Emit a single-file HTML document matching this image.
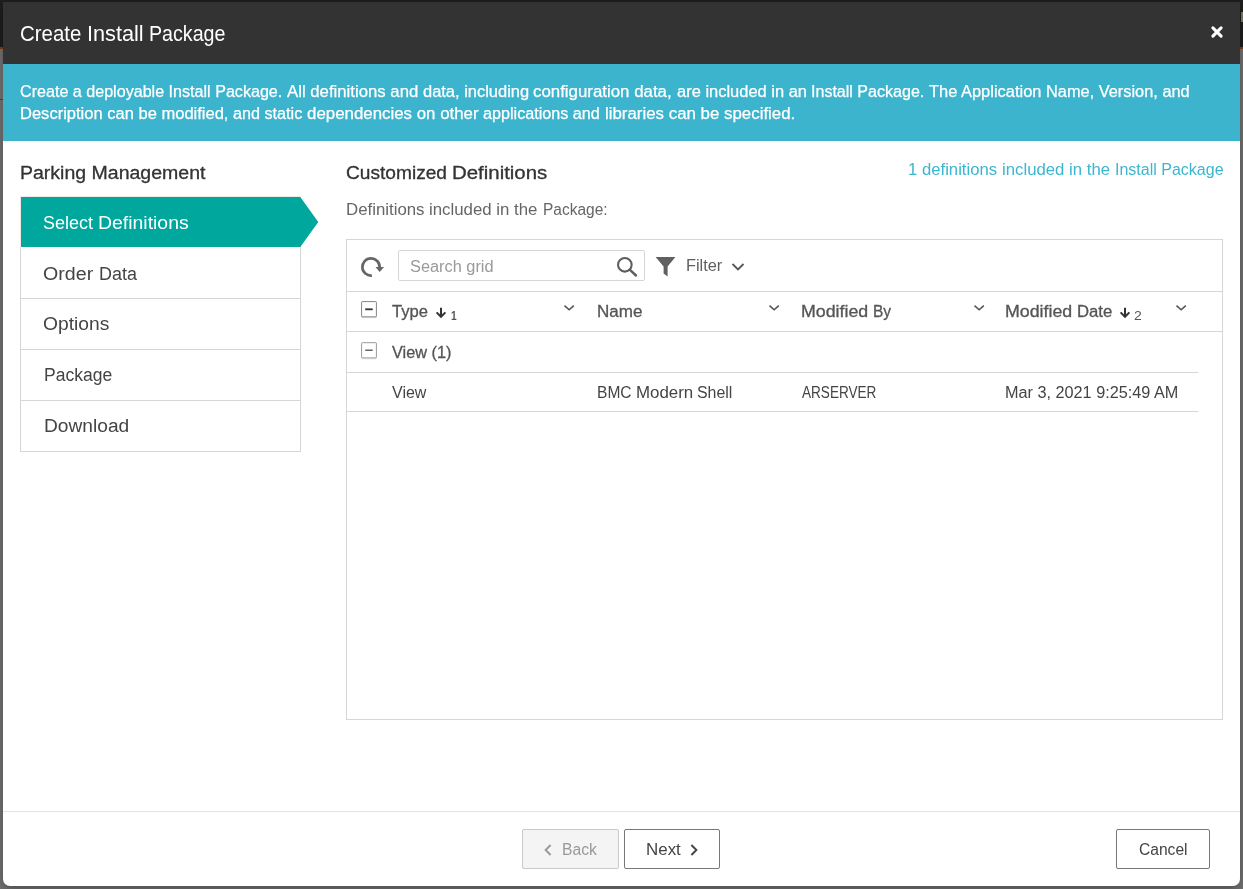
<!DOCTYPE html>
<html lang="en">
<head>
<meta charset="utf-8">
<title>Create Install Package</title>
<style>
html,body{margin:0;padding:0;}
body{width:1243px;height:889px;position:relative;overflow:hidden;background:#737373;font-family:"Liberation Sans",sans-serif;}
.abs{position:absolute;}
.t{position:absolute;transform-origin:0 0;white-space:pre;line-height:normal;font-family:"Liberation Sans",sans-serif;}
#bg-top{left:0;top:0;width:1243px;height:47px;background:#1e1e1e;}
#bg-orange{left:0;top:47px;width:1243px;height:2px;background:#8a3c08;}
#modal{left:3px;top:2px;width:1237px;height:884px;background:#ffffff;border-radius:0 0 7px 7px;box-shadow:0 4px 12px rgba(0,0,0,.32);overflow:hidden;}
#hdr{left:0;top:0;width:1237px;height:62px;background:#333333;}
#banner{left:0;top:62px;width:1237px;height:77px;background:#3cb4ce;}
#footline{left:0;top:809px;width:1237px;height:1px;background:#e3e3e3;}
#nav{left:20px;top:197px;width:279px;height:254px;border:1px solid #d6d6d6;border-top:none;}
.navline{left:20px;width:281px;height:1px;background:#d6d6d6;}
#navsel{left:20px;top:196px;width:279px;height:50px;background:#00a79d;border-left:1px solid #f3e6e6;border-top:1px solid #f3e6e6;}
#grid{left:346px;top:239px;width:875px;height:479px;border:1px solid #d6d6d6;}
.hline{height:1px;background:#d6d6d6;}
#search{left:398px;top:250px;width:245px;height:29px;border:1px solid #d6d6d6;border-radius:2px;background:#fff;}
.btn{top:829px;height:38px;border:1px solid #777;border-radius:2px;background:#fff;}

#texts{position:absolute;left:0;top:0;width:1243px;height:889px;will-change:transform;}

</style>
</head>
<body>
<div id="bg-top" class="abs"></div>
<div id="bg-orange" class="abs"></div>
<div class="abs" style="left:1241px;top:12px;width:2px;height:10px;background:#817b70"></div>
<div class="abs" style="left:0;top:99px;width:3px;height:1px;background:#4a4a4a"></div>
<div id="modal" class="abs">
  <div id="hdr" class="abs"></div>
  <div id="banner" class="abs"></div>
  <div id="footline" class="abs"></div>
</div>
<!-- close X -->
<svg class="abs" style="left:1208.8px;top:24px" width="16" height="16" viewBox="0 0 16 16"><path d="M3.9 3.9 L12.1 12.1 M12.1 3.9 L3.9 12.1" stroke="#fff" stroke-width="3.1" stroke-linecap="round"/></svg>
<!-- nav -->
<div id="nav" class="abs"></div>
<div class="abs navline" style="top:298px"></div>
<div class="abs navline" style="top:349px"></div>
<div class="abs navline" style="top:400px"></div>
<div id="navsel" class="abs"></div>
<svg class="abs" style="left:300px;top:197px" width="20" height="50" viewBox="0 0 20 50"><path d="M0 0 L0.3 0 L17.9 24.4 Q18.3 25 17.9 25.6 L0.3 50 L0 50 Z" fill="#00a79d"/></svg>
<!-- grid -->
<div id="grid" class="abs"></div>
<div class="abs hline" style="left:347px;top:291px;width:875px"></div>
<div class="abs hline" style="left:347px;top:331px;width:875px"></div>
<div class="abs hline" style="left:347px;top:372px;width:851px"></div>
<div class="abs hline" style="left:347px;top:411px;width:851px"></div>
<div id="search" class="abs"></div>
<!-- refresh icon -->
<svg class="abs" style="left:357px;top:253px" width="30" height="28" viewBox="0 0 30 28"><path d="M14.9 22.6 A8.65 8.65 0 1 1 22.65 14.3" fill="none" stroke="#666" stroke-width="2.7"/><path d="M18.5 14.1 L27.1 14.1 L22.7 19.1 Z" fill="#666"/></svg>
<!-- search icon -->
<svg class="abs" style="left:612px;top:253px" width="28" height="28" viewBox="0 0 28 28"><circle cx="12.85" cy="11.8" r="6.8" fill="none" stroke="#5e5e5e" stroke-width="2.1"/><path d="M17.7 16.7 L24 22.5" stroke="#5e5e5e" stroke-width="2.4" stroke-linecap="round"/></svg>
<!-- filter icon -->
<svg class="abs" style="left:654px;top:255px" width="24" height="24" viewBox="0 0 24 24"><path d="M1.6 2 L21.4 2 L13.6 11.6 L13.6 21.6 L9.6 18.6 L9.6 11.6 Z" fill="#606060"/></svg>
<!-- filter chevron -->
<svg class="abs" style="left:731px;top:262px" width="14" height="10" viewBox="0 0 14 10"><path d="M1.5 2 L7 7.5 L12.5 2" fill="none" stroke="#555" stroke-width="1.8"/></svg>
<!-- checkboxes -->
<svg class="abs" style="left:360px;top:300px" width="19" height="20" viewBox="0 0 19 20"><path d="M1.4 17.7 H16.6" stroke="#d2d2d2" stroke-width="0.9"/><rect x="1.6" y="1.6" width="14.8" height="15.2" rx="0.6" fill="#fff" stroke="#858585" stroke-width="1"/><rect x="5.2" y="8.4" width="7.5" height="1.8" fill="#333"/></svg>
<svg class="abs" style="left:360px;top:341px" width="19" height="20" viewBox="0 0 19 20"><path d="M1.4 17.8 H16.6" stroke="#dcdcdc" stroke-width="0.9"/><rect x="1.6" y="1.7" width="14.8" height="15.2" rx="0.6" fill="#fff" stroke="#9a9a9a" stroke-width="1"/><rect x="5.2" y="8.5" width="7.5" height="1.5" fill="#666"/></svg>
<!-- header chevrons -->
<svg class="abs hc" style="left:563px;top:303.6px" width="12" height="8" viewBox="0 0 12 8"><path d="M1.5 1.7 L6.15 5.8 L10.8 1.7" fill="none" stroke="#555" stroke-width="1.6"/></svg>
<svg class="abs hc" style="left:768px;top:303.6px" width="12" height="8" viewBox="0 0 12 8"><path d="M1.5 1.7 L6.15 5.8 L10.8 1.7" fill="none" stroke="#555" stroke-width="1.6"/></svg>
<svg class="abs hc" style="left:973px;top:303.6px" width="12" height="8" viewBox="0 0 12 8"><path d="M1.5 1.7 L6.15 5.8 L10.8 1.7" fill="none" stroke="#555" stroke-width="1.6"/></svg>
<svg class="abs hc" style="left:1175px;top:303.6px" width="12" height="8" viewBox="0 0 12 8"><path d="M1.5 1.7 L6.15 5.8 L10.8 1.7" fill="none" stroke="#555" stroke-width="1.6"/></svg>
<!-- sort arrows -->
<svg class="abs" style="left:434.1px;top:306px" width="14" height="14" viewBox="0 0 14 14"><path d="M7 1.8 L7 10.8 M2.6 6.4 L7 10.8 L11.4 6.4" fill="none" stroke="#333" stroke-width="2"/></svg>
<svg class="abs" style="left:1118.1px;top:306px" width="14" height="14" viewBox="0 0 14 14"><path d="M7 1.8 L7 10.8 M2.6 6.4 L7 10.8 L11.4 6.4" fill="none" stroke="#333" stroke-width="2"/></svg>
<!-- buttons -->
<div class="abs btn" style="left:522px;width:95px;background:#f4f4f4;border-color:#c9c9c9"></div>
<div class="abs btn" style="left:624px;width:94px"></div>
<div class="abs btn" style="left:1116px;width:92px"></div>
<svg class="abs" style="left:541.4px;top:841.6px" width="14" height="16" viewBox="0 0 14 16"><path d="M9.6 3.0 L4.6 8 L9.6 13.0" fill="none" stroke="#999" stroke-width="1.9"/></svg>
<svg class="abs" style="left:687.1px;top:841.6px" width="14" height="16" viewBox="0 0 14 16"><path d="M4.4 3.0 L9.4 8 L4.4 13.0" fill="none" stroke="#444" stroke-width="1.9"/></svg>

<div id="texts">
<span id="t_title_1" class="t" style="left:20.00px;top:22.00px;font-size:21.5px;font-weight:400;color:#ffffff;transform:scaleX(0.9495);">Create </span>
<span id="t_title_2" class="t" style="left:87.00px;top:22.00px;font-size:21.5px;font-weight:400;color:#ffffff;transform:scaleX(1.0094);">Install </span>
<span id="t_title_3" class="t" style="left:149.00px;top:22.00px;font-size:21.5px;font-weight:400;color:#ffffff;transform:scaleX(0.9141);">Package</span>
<span id="t_b1_1" class="t" style="left:20.00px;top:83.00px;font-size:16px;font-weight:400;color:#ffffff;transform:scaleX(1.0065);-webkit-text-stroke:0.25px #ffffff;">Create a deployable Install Package. </span>
<span id="t_b1_2" class="t" style="left:287.00px;top:83.00px;font-size:16px;font-weight:400;color:#ffffff;transform:scaleX(1.0467);-webkit-text-stroke:0.25px #ffffff;">All definitions and </span>
<span id="t_b1_3" class="t" style="left:423.00px;top:83.00px;font-size:16px;font-weight:400;color:#ffffff;transform:scaleX(1.0283);-webkit-text-stroke:0.25px #ffffff;">data, including </span>
<span id="t_b1_4" class="t" style="left:533.00px;top:83.00px;font-size:16px;font-weight:400;color:#ffffff;transform:scaleX(1.0530);-webkit-text-stroke:0.25px #ffffff;">configuration data, </span>
<span id="t_b1_5" class="t" style="left:677.00px;top:83.00px;font-size:16px;font-weight:400;color:#ffffff;transform:scaleX(1.0292);-webkit-text-stroke:0.25px #ffffff;">are included in an </span>
<span id="t_b1_6" class="t" style="left:811.00px;top:83.00px;font-size:16px;font-weight:400;color:#ffffff;transform:scaleX(1.0027);-webkit-text-stroke:0.25px #ffffff;">Install Package. </span>
<span id="t_b1_7" class="t" style="left:929.00px;top:83.00px;font-size:16px;font-weight:400;color:#ffffff;transform:scaleX(1.0278);-webkit-text-stroke:0.25px #ffffff;">The Application </span>
<span id="t_b1_8" class="t" style="left:1046.00px;top:83.00px;font-size:16px;font-weight:400;color:#ffffff;transform:scaleX(1.0225);-webkit-text-stroke:0.25px #ffffff;">Name, Version, and</span>
<span id="t_b2_1" class="t" style="left:20.00px;top:105.00px;font-size:16px;font-weight:400;color:#ffffff;transform:scaleX(1.0326);-webkit-text-stroke:0.25px #ffffff;">Description can be modified, </span>
<span id="t_b2_2" class="t" style="left:233.00px;top:105.00px;font-size:16px;font-weight:400;color:#ffffff;transform:scaleX(1.0106);-webkit-text-stroke:0.25px #ffffff;">and static </span>
<span id="t_b2_3" class="t" style="left:307.00px;top:105.00px;font-size:16px;font-weight:400;color:#ffffff;transform:scaleX(1.0541);-webkit-text-stroke:0.25px #ffffff;">dependencies on other </span>
<span id="t_b2_4" class="t" style="left:483.00px;top:105.00px;font-size:16px;font-weight:400;color:#ffffff;transform:scaleX(1.0100);-webkit-text-stroke:0.25px #ffffff;">applications and </span>
<span id="t_b2_5" class="t" style="left:605.00px;top:105.00px;font-size:16px;font-weight:400;color:#ffffff;transform:scaleX(1.0539);-webkit-text-stroke:0.25px #ffffff;">libraries can be specified.</span>
<span id="t_pm" class="t" style="left:20.00px;top:163.00px;font-size:18px;font-weight:400;color:#333333;transform:scaleX(1.0836);-webkit-text-stroke:0.3px #333333;">Parking Management</span>
<span id="t_n1_1" class="t" style="left:43.00px;top:213.00px;font-size:18px;font-weight:400;color:#ffffff;transform:scaleX(0.9984);">Select </span>
<span id="t_n1_2" class="t" style="left:98.00px;top:213.00px;font-size:18px;font-weight:400;color:#ffffff;transform:scaleX(1.0791);">Definitions</span>
<span id="t_n2_1" class="t" style="left:43.00px;top:264.00px;font-size:18px;font-weight:400;color:#444444;transform:scaleX(1.0902);">Order </span>
<span id="t_n2_2" class="t" style="left:99.00px;top:264.00px;font-size:18px;font-weight:400;color:#444444;transform:scaleX(0.9958);">Data</span>
<span id="t_n3" class="t" style="left:43.00px;top:314.00px;font-size:18px;font-weight:400;color:#444444;transform:scaleX(1.0686);">Options</span>
<span id="t_n4" class="t" style="left:44.00px;top:365.00px;font-size:18px;font-weight:400;color:#444444;transform:scaleX(0.9737);">Package</span>
<span id="t_n5" class="t" style="left:44.00px;top:416.00px;font-size:18px;font-weight:400;color:#444444;transform:scaleX(1.0642);">Download</span>
<span id="t_cd_1" class="t" style="left:346.00px;top:163.00px;font-size:18px;font-weight:400;color:#333333;transform:scaleX(1.0629);-webkit-text-stroke:0.3px #333333;">Customized </span>
<span id="t_cd_2" class="t" style="left:452.00px;top:163.00px;font-size:18px;font-weight:400;color:#333333;transform:scaleX(1.1335);-webkit-text-stroke:0.3px #333333;">Definitions</span>
<span id="t_cnt_1" class="t" style="left:908.00px;top:161.00px;font-size:16px;font-weight:400;color:#3cb6ce;transform:scaleX(1.0435);">1 definitions </span>
<span id="t_cnt_2" class="t" style="left:1002.00px;top:161.00px;font-size:16px;font-weight:400;color:#3cb6ce;transform:scaleX(1.0477);">included in the </span>
<span id="t_cnt_3" class="t" style="left:1115.00px;top:161.00px;font-size:16px;font-weight:400;color:#3cb6ce;transform:scaleX(1.0007);">Install Package</span>
<span id="t_di_1" class="t" style="left:346.00px;top:201.00px;font-size:16px;font-weight:400;color:#666666;transform:scaleX(1.0505);">Definitions </span>
<span id="t_di_2" class="t" style="left:429.00px;top:201.00px;font-size:16px;font-weight:400;color:#666666;transform:scaleX(1.0502);">included in the </span>
<span id="t_di_3" class="t" style="left:543.00px;top:201.00px;font-size:16px;font-weight:400;color:#666666;transform:scaleX(0.9680);">Package:</span>
<span id="t_sg" class="t" style="left:410.00px;top:258.00px;font-size:16px;font-weight:400;color:#9a9a9a;transform:scaleX(1.0216);">Search grid</span>
<span id="t_fl" class="t" style="left:686.00px;top:257.00px;font-size:16px;font-weight:400;color:#606060;transform:scaleX(1.0211);">Filter</span>
<span id="t_h1" class="t" style="left:392.00px;top:303.00px;font-size:16px;font-weight:400;color:#555555;transform:scaleX(1.0378);-webkit-text-stroke:0.3px #555555;">Type</span>
<span id="t_h1n" class="t" style="left:451.00px;top:309.00px;font-size:12px;font-weight:700;color:#555555;transform:scaleX(0.8478);">1</span>
<span id="t_h2" class="t" style="left:597.00px;top:303.00px;font-size:16px;font-weight:400;color:#555555;transform:scaleX(1.0643);-webkit-text-stroke:0.3px #555555;">Name</span>
<span id="t_h3_1" class="t" style="left:801.00px;top:303.00px;font-size:16px;font-weight:400;color:#555555;transform:scaleX(1.1111);-webkit-text-stroke:0.3px #555555;">Modified </span>
<span id="t_h3_2" class="t" style="left:873.00px;top:303.00px;font-size:16px;font-weight:400;color:#555555;transform:scaleX(0.9700);-webkit-text-stroke:0.3px #555555;">By</span>
<span id="t_h4_1" class="t" style="left:1005.00px;top:303.00px;font-size:16px;font-weight:400;color:#555555;transform:scaleX(1.1111);-webkit-text-stroke:0.3px #555555;">Modified </span>
<span id="t_h4_2" class="t" style="left:1077.00px;top:303.00px;font-size:16px;font-weight:400;color:#555555;transform:scaleX(1.0445);-webkit-text-stroke:0.3px #555555;">Date</span>
<span id="t_h4n" class="t" style="left:1134.00px;top:309.00px;font-size:12px;font-weight:400;color:#555555;transform:scaleX(1.1678);">2</span>
<span id="t_g1" class="t" style="left:392.00px;top:344.00px;font-size:16px;font-weight:400;color:#555555;transform:scaleX(1.0186);-webkit-text-stroke:0.3px #555555;">View (1)</span>
<span id="t_r1" class="t" style="left:392.00px;top:384.00px;font-size:16px;font-weight:400;color:#444444;transform:scaleX(1.0012);">View</span>
<span id="t_r2_1" class="t" style="left:597.00px;top:384.00px;font-size:16px;font-weight:400;color:#444444;transform:scaleX(0.9725);">BMC </span>
<span id="t_r2_2" class="t" style="left:636.00px;top:384.00px;font-size:16px;font-weight:400;color:#444444;transform:scaleX(1.0548);">Modern </span>
<span id="t_r2_3" class="t" style="left:697.00px;top:384.00px;font-size:16px;font-weight:400;color:#444444;transform:scaleX(0.9946);">Shell</span>
<span id="t_r3" class="t" style="left:802.00px;top:384.00px;font-size:16px;font-weight:400;color:#444444;transform:scaleX(0.8475);">ARSERVER</span>
<span id="t_r4" class="t" style="left:1005.00px;top:384.00px;font-size:16px;font-weight:400;color:#444444;transform:scaleX(1.0145);">Mar 3, 2021 9:25:49 AM</span>
<span id="t_back" class="t" style="left:562.00px;top:841.00px;font-size:16px;font-weight:400;color:#999999;transform:scaleX(0.9828);">Back</span>
<span id="t_next" class="t" style="left:646.00px;top:841.00px;font-size:16px;font-weight:400;color:#444444;transform:scaleX(1.0579);">Next</span>
<span id="t_cancel" class="t" style="left:1139.00px;top:841.00px;font-size:16px;font-weight:400;color:#444444;transform:scaleX(0.9743);">Cancel</span>
</div>
</body>
</html>
